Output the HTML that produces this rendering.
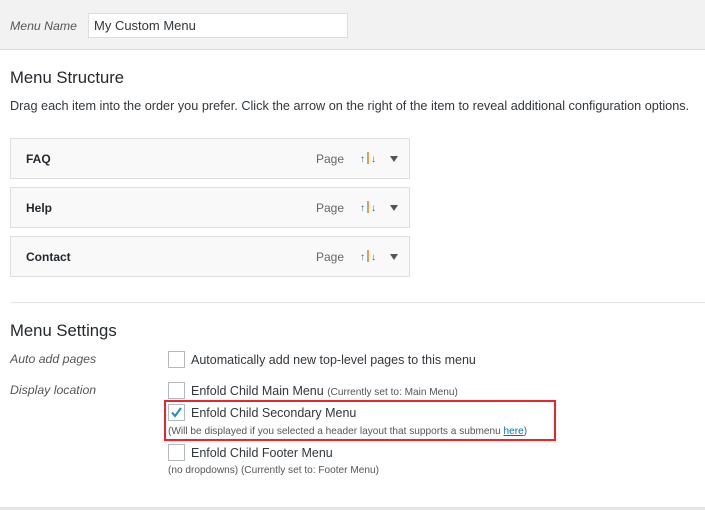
<!DOCTYPE html>
<html><head><meta charset="utf-8"><style>
*{margin:0;padding:0;box-sizing:border-box}
body{width:705px;height:510px;background:#fff;font-family:"Liberation Sans",sans-serif;color:#23282d;position:relative;overflow:hidden}
.a{position:absolute;white-space:nowrap}
.top{left:0;top:0;width:705px;height:50px;background:#f2f2f2;border-bottom:1px solid #dddddd}
.inp{left:88px;top:13px;width:260px;height:25px;background:#fff;border:1px solid #ddd;font-size:13px;padding:4px 5px;color:#32373c}
.item{left:10px;width:400px;height:41px;background:#f9f9f9;border:1px solid #dfdfdf}
.item b{position:absolute;left:15px;top:13px;font-size:12px;color:#23282d}
.item .pg{position:absolute;left:305px;top:13px;font-size:12px;color:#666}
.item .ar{position:absolute;left:349px;top:13px;font-size:10px;color:#0073aa}
.item .ar i{display:inline-block;width:2px;height:12px;background:#e0a050;vertical-align:-2px;margin:0 2px}
.item .tri{position:absolute;left:379px;top:17px;width:0;height:0;border-left:4px solid transparent;border-right:4px solid transparent;border-top:6px solid #555}
.cb{width:17px;height:17px;border:1px solid #b4b9be;background:#fff;position:absolute}
.lbl{font-size:12.3px;font-style:italic;color:#555}
.t{font-size:12.5px;color:#32373c}
.s{font-size:10.1px;color:#555}
</style></head><body>
<div class="a top"></div>
<div class="a lbl" style="left:10px;top:19px">Menu Name</div>
<div class="a inp">My Custom Menu</div>
<div class="a" style="left:10px;top:68px;font-size:16.7px">Menu Structure</div>
<div class="a" style="left:10px;top:99px;font-size:12.7px;color:#32373c">Drag each item into the order you prefer. Click the arrow on the right of the item to reveal additional configuration options.</div>

<div class="a item" style="top:138px"><b>FAQ</b><span class="pg">Page</span><span class="ar">↑<i></i>↓</span><span class="tri"></span></div>
<div class="a item" style="top:187px"><b>Help</b><span class="pg">Page</span><span class="ar">↑<i></i>↓</span><span class="tri"></span></div>
<div class="a item" style="top:236px"><b>Contact</b><span class="pg">Page</span><span class="ar">↑<i></i>↓</span><span class="tri"></span></div>

<div class="a" style="left:10px;top:302px;width:695px;height:1px;background:#e5e5e5"></div>
<div class="a" style="left:10px;top:321px;font-size:16.7px">Menu Settings</div>
<div class="a lbl" style="left:10px;top:352px">Auto add pages</div>
<div class="a lbl" style="left:10px;top:383px">Display location</div>

<div class="cb" style="left:168px;top:351px"></div>
<div class="a t" style="left:191px;top:353px">Automatically add new top-level pages to this menu</div>
<div class="cb" style="left:168px;top:382px"></div>
<div class="a t" style="left:191px;top:384px">Enfold Child Main Menu <span class="s">(Currently set to: Main Menu)</span></div>
<div class="cb" style="left:168px;top:404px"><svg width="15" height="15" viewBox="0 0 15 15" style="position:absolute;left:0;top:0"><path d="M3 7.5 L6 11 L12 3" stroke="#1e8cbe" stroke-width="2" fill="none"/></svg></div>
<div class="a t" style="left:191px;top:406px">Enfold Child Secondary Menu</div>
<div class="a s" style="left:168px;top:426px">(Will be displayed if you selected a header layout that supports a submenu <span style="color:#0073aa;text-decoration:underline">here</span>)</div>
<div class="a" style="left:164px;top:400px;width:392px;height:41px;border:2px solid #e8262b"></div>
<div class="cb" style="left:168px;top:444px"></div>
<div class="a t" style="left:191px;top:446px">Enfold Child Footer Menu</div>
<div class="a s" style="left:168px;top:465px">(no dropdowns) (Currently set to: Footer Menu)</div>

<div class="a" style="left:0;top:507px;width:705px;height:3px;background:#e5e5e5"></div>
</body></html>
